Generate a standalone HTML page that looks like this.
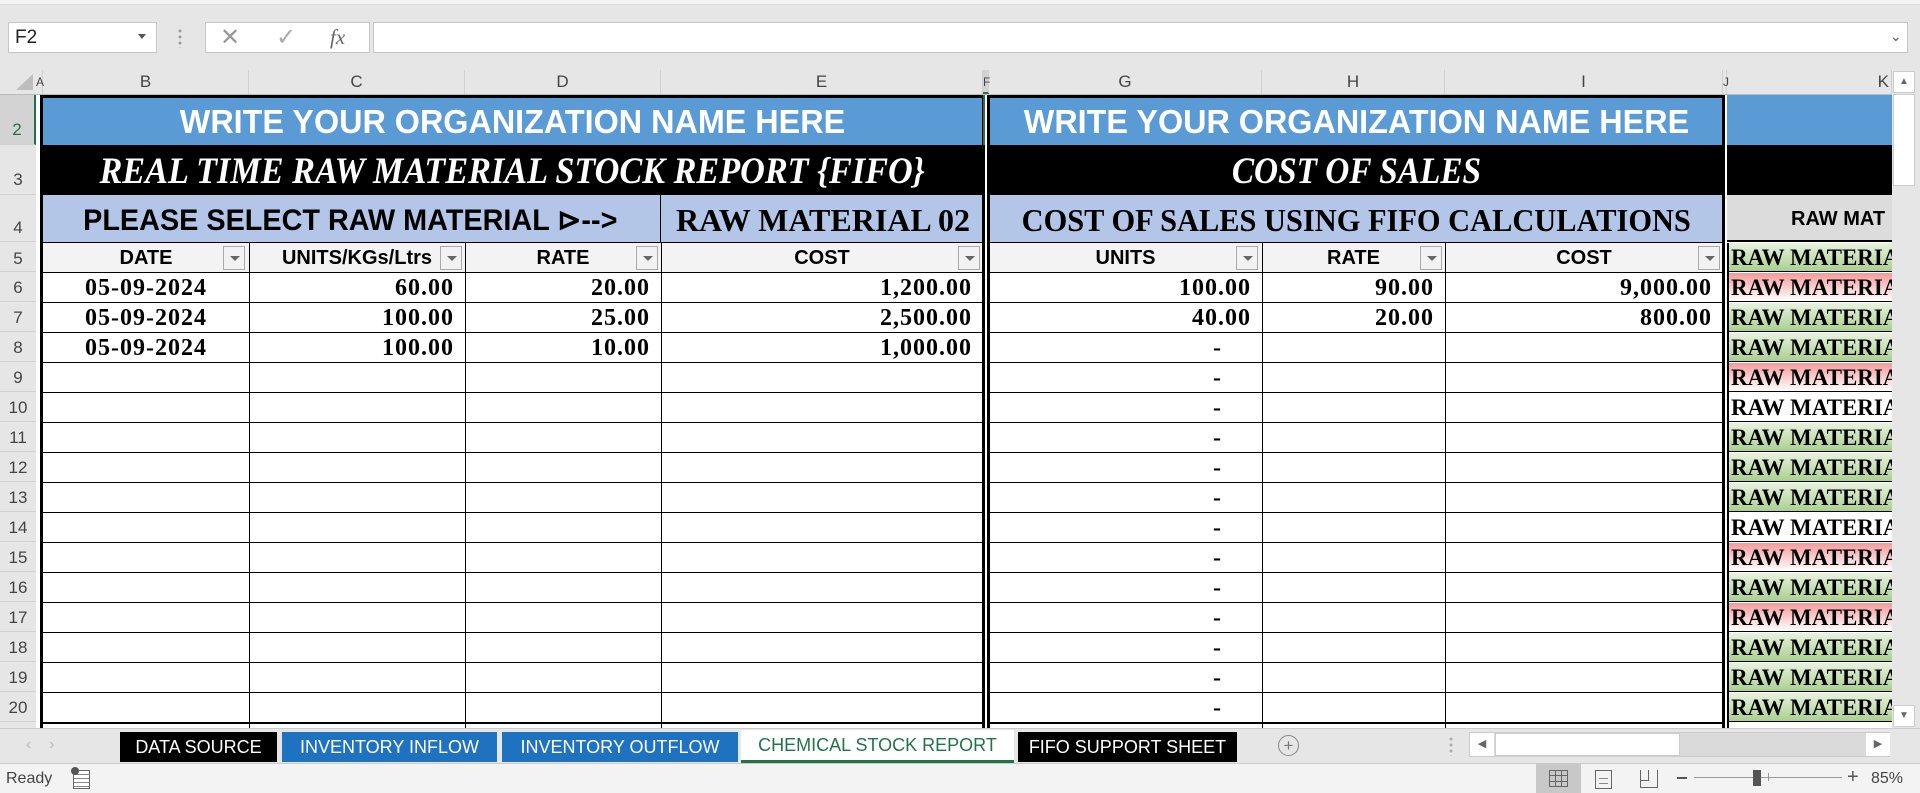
<!DOCTYPE html>
<html><head><meta charset="utf-8">
<style>
*{margin:0;padding:0;box-sizing:border-box}
body{width:1920px;height:793px;overflow:hidden;background:#e6e6e6;font-family:"Liberation Sans",sans-serif;position:relative}
.a{position:absolute;white-space:nowrap;overflow:hidden}
.s{font-family:"Liberation Sans",sans-serif;font-weight:bold}
.sf{font-family:"Liberation Serif",serif;font-weight:bold}
.t{display:inline-block;transform-origin:center center}
.hl{position:absolute;height:1px;background:#000}
.vl{position:absolute;width:1px;background:#000}
.rh{position:absolute;left:0;width:36px;text-align:center;color:#444;font-size:17px;background:#e6e6e6;border-bottom:1px solid #d0d0d0}
.ch{position:absolute;top:70px;height:24px;line-height:24px;text-align:center;color:#444;font-size:17px;border-right:1px solid #d0d0d0}
.fb{position:absolute;width:22px;height:24px;border:1px solid #aaa;background:#f2f2f2;top:246px}
.fb:after{content:"";position:absolute;left:6px;top:9px;border-left:5px solid transparent;border-right:5px solid transparent;border-top:5px solid #666}
.d{position:absolute;font-family:"Liberation Serif",serif;font-weight:bold;font-size:24px;letter-spacing:1px;height:30px;line-height:32px;color:#000}
.k{position:absolute;left:1727px;width:165px;height:29px;line-height:30px;font-family:"Liberation Serif",serif;font-weight:bold;font-size:23px;padding-left:4px;overflow:hidden;white-space:nowrap;border-bottom:1px solid #000}
.g{background:linear-gradient(to bottom,#e8f2e0,#a9d08e)}
.r{background:linear-gradient(to bottom,#f49a9a,#fff)}
.w{background:#fff}
.tab{position:absolute;top:732px;height:30px;line-height:30px;font-size:18px;text-align:center;color:#fff}
</style></head><body>
<div class="a" style="left:0;top:0;width:1920px;height:5px;background:#f3f3f3;border-bottom:1px solid #ddd"></div>
<!-- formula bar -->
<div class="a" style="left:8px;top:22px;width:149px;height:31px;background:#fff;border:1px solid #c6c6c6;font-size:19px;line-height:29px;padding-left:6px;color:#222">F2</div>
<div class="a" style="left:138px;top:34px;width:0;height:0;border-left:4px solid transparent;border-right:4px solid transparent;border-top:5px solid #555"></div>
<div class="a" style="left:178px;top:28px;width:4px;height:20px;background:radial-gradient(circle,#999 1.3px,transparent 1.6px) 0 0/4px 6px"></div>
<div class="a" style="left:205px;top:22px;width:165px;height:31px;background:#fff;border:1px solid #c6c6c6"></div>
<div class="a" style="left:220px;top:22px;font-size:24px;line-height:31px;color:#999">✕</div>
<div class="a" style="left:276px;top:22px;font-size:24px;line-height:31px;color:#aaa">✓</div>
<div class="a" style="left:330px;top:22px;font-size:21px;line-height:31px;color:#666;font-family:'Liberation Serif',serif;font-style:italic">fx</div>
<div class="a" style="left:373px;top:22px;width:1535px;height:31px;background:#fff;border:1px solid #c6c6c6"></div>
<div class="a" style="left:1890px;top:28px;font-size:14px;color:#555">&#8964;</div>
<!-- column headers -->
<div class="a" style="left:0;top:70px;width:1892px;height:25px;background:#e6e6e6;border-bottom:1px solid #bbb"></div>
<div class="a" style="left:16px;top:74px;width:0;height:0;border-left:17px solid transparent;border-bottom:16px solid #bdbdbd"></div>
<div class="ch" style="left:36px;width:7px;font-size:12px">A</div>
<div class="ch" style="left:43px;width:206px">B</div>
<div class="ch" style="left:249px;width:216px">C</div>
<div class="ch" style="left:465px;width:196px">D</div>
<div class="ch" style="left:661px;width:322px">E</div>
<div class="ch" style="left:983px;width:6px;font-size:12px;background:#d3d3d3;border-bottom:2px solid #217346">F</div>
<div class="ch" style="left:989px;width:273px">G</div>
<div class="ch" style="left:1262px;width:183px">H</div>
<div class="ch" style="left:1445px;width:278px">I</div>
<div class="ch" style="left:1723px;width:4px;font-size:12px">J</div>
<div class="ch" style="left:1727px;width:165px;text-align:right;padding-right:2px">K</div>
<!-- row headers -->
<div class="rh" style="top:95px;height:50px;line-height:70px;color:#217346;background:#d3d3d3;border-right:2px solid #217346">2</div>
<div class="rh" style="top:145px;height:50px;line-height:70px">3</div>
<div class="rh" style="top:195px;height:47px;line-height:66px">4</div>
<div class="rh" style="top:242px;height:30px;line-height:34px">5</div>
<div class="rh" style="top:272px;height:30px;line-height:32px">6</div>
<div class="rh" style="top:302px;height:30px;line-height:32px">7</div>
<div class="rh" style="top:332px;height:30px;line-height:32px">8</div>
<div class="rh" style="top:362px;height:30px;line-height:32px">9</div>
<div class="rh" style="top:392px;height:30px;line-height:32px">10</div>
<div class="rh" style="top:422px;height:30px;line-height:32px">11</div>
<div class="rh" style="top:452px;height:30px;line-height:32px">12</div>
<div class="rh" style="top:482px;height:30px;line-height:32px">13</div>
<div class="rh" style="top:512px;height:30px;line-height:32px">14</div>
<div class="rh" style="top:542px;height:30px;line-height:32px">15</div>
<div class="rh" style="top:572px;height:30px;line-height:32px">16</div>
<div class="rh" style="top:602px;height:30px;line-height:32px">17</div>
<div class="rh" style="top:632px;height:30px;line-height:32px">18</div>
<div class="rh" style="top:662px;height:30px;line-height:32px">19</div>
<div class="rh" style="top:692px;height:30px;line-height:32px">20</div>
<div class="a" style="left:36px;top:95px;width:4px;height:633px;background:#fff"></div>
<!-- sheet white area -->
<div class="a" style="left:40px;top:95px;width:1852px;height:633px;background:#fff"></div>
<!-- row 2 -->
<div class="a s" style="left:40px;top:95px;width:945px;height:50px;background:#5b9bd5;color:#fff;text-align:center;line-height:54px;font-size:33px"><span class="t" style="transform:scaleX(.98)">WRITE YOUR ORGANIZATION NAME HERE</span></div>
<div class="a s" style="left:988px;top:95px;width:737px;height:50px;background:#5b9bd5;color:#fff;text-align:center;line-height:54px;font-size:33px"><span class="t" style="transform:scaleX(.98)">WRITE YOUR ORGANIZATION NAME HERE</span></div>
<div class="a" style="left:1727px;top:95px;width:165px;height:50px;background:#5b9bd5"></div>
<!-- row 3 -->
<div class="a sf" style="left:40px;top:145px;width:945px;height:50px;background:#000;color:#fff;text-align:center;line-height:54px;font-size:37px;font-style:italic"><span class="t" style="transform:scaleX(.925)">REAL TIME RAW MATERIAL STOCK REPORT {FIFO}</span></div>
<div class="a sf" style="left:988px;top:145px;width:737px;height:50px;background:#000;color:#fff;text-align:center;line-height:54px;font-size:37px;font-style:italic"><span class="t" style="transform:scaleX(.9)">COST OF SALES</span></div>
<div class="a" style="left:1727px;top:145px;width:165px;height:50px;background:#000"></div>
<!-- row 4 -->
<div class="a s" style="left:40px;top:195px;width:621px;height:47px;background:#b4c6e7;color:#000;text-align:center;line-height:52px;font-size:30px;border-right:1px solid #000"><span class="t" style="transform:scaleX(.96)">PLEASE SELECT RAW MATERIAL ⊳--></span></div>
<div class="a sf" style="left:661px;top:195px;width:324px;height:47px;background:#b4c6e7;color:#000;text-align:center;line-height:50px;font-size:32px"><span class="t" style="transform:scaleX(1.0)">RAW MATERIAL 02</span></div>
<div class="a sf" style="left:988px;top:195px;width:737px;height:47px;background:#b4c6e7;color:#000;text-align:center;line-height:50px;font-size:32px"><span class="t" style="transform:scaleX(.95)">COST OF SALES USING FIFO CALCULATIONS</span></div>
<div class="a s" style="left:1727px;top:195px;width:165px;height:47px;background:#dcdcdc;color:#000;line-height:48px;font-size:20px;padding-left:64px;border-bottom:2px solid #000">RAW MAT</div>
<!-- row 5 -->
<div class="a" style="left:40px;top:242px;width:945px;height:30px;background:#f3f3f3"></div>
<div class="a" style="left:988px;top:242px;width:737px;height:30px;background:#f3f3f3"></div>
<div class="a s" style="left:43px;top:242px;width:206px;height:30px;line-height:33px;text-align:center;font-size:20px">DATE</div>
<div class="a s" style="left:249px;top:242px;width:216px;height:30px;line-height:33px;text-align:center;font-size:20px">UNITS/KGs/Ltrs</div>
<div class="a s" style="left:465px;top:242px;width:196px;height:30px;line-height:33px;text-align:center;font-size:20px">RATE</div>
<div class="a s" style="left:661px;top:242px;width:322px;height:30px;line-height:33px;text-align:center;font-size:20px">COST</div>
<div class="a s" style="left:989px;top:242px;width:273px;height:30px;line-height:33px;text-align:center;font-size:20px">UNITS</div>
<div class="a s" style="left:1262px;top:242px;width:183px;height:30px;line-height:33px;text-align:center;font-size:20px">RATE</div>
<div class="a s" style="left:1445px;top:242px;width:278px;height:30px;line-height:33px;text-align:center;font-size:20px">COST</div>
<div class="fb" style="left:223px"></div>
<div class="fb" style="left:440px"></div>
<div class="fb" style="left:636px"></div>
<div class="fb" style="left:958px"></div>
<div class="fb" style="left:1236px"></div>
<div class="fb" style="left:1420px"></div>
<div class="fb" style="left:1698px"></div>
<!-- horizontal lines -->
<div class="hl" style="left:40px;top:242px;width:945px"></div>
<div class="hl" style="left:988px;top:242px;width:737px"></div>
<div class="hl" style="left:40px;top:272px;width:945px"></div>
<div class="hl" style="left:988px;top:272px;width:737px"></div>
<div class="hl" style="left:40px;top:302px;width:945px"></div><div class="hl" style="left:988px;top:302px;width:737px"></div>
<div class="hl" style="left:40px;top:332px;width:945px"></div><div class="hl" style="left:988px;top:332px;width:737px"></div>
<div class="hl" style="left:40px;top:362px;width:945px"></div><div class="hl" style="left:988px;top:362px;width:737px"></div>
<div class="hl" style="left:40px;top:392px;width:945px"></div><div class="hl" style="left:988px;top:392px;width:737px"></div>
<div class="hl" style="left:40px;top:422px;width:945px"></div><div class="hl" style="left:988px;top:422px;width:737px"></div>
<div class="hl" style="left:40px;top:452px;width:945px"></div><div class="hl" style="left:988px;top:452px;width:737px"></div>
<div class="hl" style="left:40px;top:482px;width:945px"></div><div class="hl" style="left:988px;top:482px;width:737px"></div>
<div class="hl" style="left:40px;top:512px;width:945px"></div><div class="hl" style="left:988px;top:512px;width:737px"></div>
<div class="hl" style="left:40px;top:542px;width:945px"></div><div class="hl" style="left:988px;top:542px;width:737px"></div>
<div class="hl" style="left:40px;top:572px;width:945px"></div><div class="hl" style="left:988px;top:572px;width:737px"></div>
<div class="hl" style="left:40px;top:602px;width:945px"></div><div class="hl" style="left:988px;top:602px;width:737px"></div>
<div class="hl" style="left:40px;top:632px;width:945px"></div><div class="hl" style="left:988px;top:632px;width:737px"></div>
<div class="hl" style="left:40px;top:662px;width:945px"></div><div class="hl" style="left:988px;top:662px;width:737px"></div>
<div class="hl" style="left:40px;top:692px;width:945px"></div><div class="hl" style="left:988px;top:692px;width:737px"></div>
<div class="hl" style="left:40px;top:722px;width:945px;height:2px"></div><div class="hl" style="left:988px;top:722px;width:737px;height:2px"></div>
<!-- vertical lines -->
<div class="vl" style="left:249px;top:242px;height:486px"></div>
<div class="vl" style="left:465px;top:242px;height:486px"></div>
<div class="vl" style="left:661px;top:242px;height:486px"></div>
<div class="vl" style="left:1262px;top:242px;height:486px"></div>
<div class="vl" style="left:1445px;top:242px;height:486px"></div>
<!-- thick outer borders -->
<div class="a" style="left:40px;top:95px;width:945px;height:633px;border:3px solid #000;border-bottom:0"></div>
<div class="a" style="left:987px;top:95px;width:738px;height:633px;border:3px solid #000;border-bottom:0"></div>
<div class="a" style="left:983px;top:95px;width:2px;height:50px;background:#217346"></div>
<div class="a" style="left:1725px;top:95px;width:2px;height:633px;background:#fff"></div>
<!-- data -->
<div class="d" style="left:43px;top:272px;width:206px;text-align:center">05-09-2024</div>
<div class="d" style="left:249px;top:272px;width:205px;text-align:right">60.00</div>
<div class="d" style="left:465px;top:272px;width:185px;text-align:right">20.00</div>
<div class="d" style="left:661px;top:272px;width:311px;text-align:right">1,200.00</div>
<div class="d" style="left:989px;top:272px;width:262px;text-align:right">100.00</div>
<div class="d" style="left:1262px;top:272px;width:172px;text-align:right">90.00</div>
<div class="d" style="left:1445px;top:272px;width:267px;text-align:right">9,000.00</div>
<div class="d" style="left:43px;top:302px;width:206px;text-align:center">05-09-2024</div>
<div class="d" style="left:249px;top:302px;width:205px;text-align:right">100.00</div>
<div class="d" style="left:465px;top:302px;width:185px;text-align:right">25.00</div>
<div class="d" style="left:661px;top:302px;width:311px;text-align:right">2,500.00</div>
<div class="d" style="left:989px;top:302px;width:262px;text-align:right">40.00</div>
<div class="d" style="left:1262px;top:302px;width:172px;text-align:right">20.00</div>
<div class="d" style="left:1445px;top:302px;width:267px;text-align:right">800.00</div>
<div class="d" style="left:43px;top:332px;width:206px;text-align:center">05-09-2024</div>
<div class="d" style="left:249px;top:332px;width:205px;text-align:right">100.00</div>
<div class="d" style="left:465px;top:332px;width:185px;text-align:right">10.00</div>
<div class="d" style="left:661px;top:332px;width:311px;text-align:right">1,000.00</div>
<div class="d" style="left:1213px;top:332px">-</div>
<div class="d" style="left:1213px;top:362px">-</div>
<div class="d" style="left:1213px;top:392px">-</div>
<div class="d" style="left:1213px;top:422px">-</div>
<div class="d" style="left:1213px;top:452px">-</div>
<div class="d" style="left:1213px;top:482px">-</div>
<div class="d" style="left:1213px;top:512px">-</div>
<div class="d" style="left:1213px;top:542px">-</div>
<div class="d" style="left:1213px;top:572px">-</div>
<div class="d" style="left:1213px;top:602px">-</div>
<div class="d" style="left:1213px;top:632px">-</div>
<div class="d" style="left:1213px;top:662px">-</div>
<div class="d" style="left:1213px;top:692px">-</div>
<!-- K column -->
<div class="k g" style="top:243px">RAW MATERIAL</div>
<div class="k r" style="top:273px">RAW MATERIAL</div>
<div class="k g" style="top:303px">RAW MATERIAL</div>
<div class="k g" style="top:333px">RAW MATERIAL</div>
<div class="k r" style="top:363px">RAW MATERIAL</div>
<div class="k w" style="top:393px">RAW MATERIAL</div>
<div class="k g" style="top:423px">RAW MATERIAL</div>
<div class="k g" style="top:453px">RAW MATERIAL</div>
<div class="k g" style="top:483px">RAW MATERIAL</div>
<div class="k w" style="top:513px">RAW MATERIAL</div>
<div class="k r" style="top:543px">RAW MATERIAL</div>
<div class="k g" style="top:573px">RAW MATERIAL</div>
<div class="k r" style="top:603px">RAW MATERIAL</div>
<div class="k g" style="top:633px">RAW MATERIAL</div>
<div class="k g" style="top:663px">RAW MATERIAL</div>
<div class="k g" style="top:693px">RAW MATERIAL</div>
<div class="a" style="left:1727px;top:243px;width:2px;height:485px;background:#000"></div>
<!-- vertical scrollbar -->
<div class="a" style="left:1892px;top:70px;width:28px;height:658px;background:#e6e6e6"></div>
<div class="a" style="left:1893px;top:71px;width:22px;height:22px;background:#fff;border:1px solid #ccc;text-align:center;font-size:10px;line-height:20px;color:#666">▲</div>
<div class="a" style="left:1893px;top:94px;width:22px;height:92px;background:#fff;border:1px solid #ccc"></div>
<div class="a" style="left:1893px;top:705px;width:22px;height:22px;background:#fff;border:1px solid #ccc;text-align:center;font-size:10px;line-height:20px;color:#666">▼</div>
<!-- tab bar -->
<div class="a" style="left:0;top:728px;width:1920px;height:36px;background:#e6e6e6;border-top:1px solid #ccc;border-bottom:1px solid #ccc"></div>
<div class="a" style="left:26px;top:736px;font-size:16px;color:#bbb;background:#e6e6e6">‹&nbsp;&nbsp;&nbsp;&nbsp;›</div>
<div class="tab" style="left:120px;width:157px;background:#000">DATA SOURCE</div>
<div class="tab" style="left:282px;width:215px;background:#1f72c0">INVENTORY INFLOW</div>
<div class="tab" style="left:502px;width:236px;background:#1f72c0">INVENTORY OUTFLOW</div>
<div class="tab" style="left:741px;width:273px;background:#fff;color:#217346;border-bottom:3px solid #217346;top:730px;height:33px">CHEMICAL STOCK REPORT</div>
<div class="tab" style="left:1018px;width:219px;background:#000">FIFO SUPPORT SHEET</div>
<div class="a" style="left:1278px;top:735px;width:21px;height:21px;border:1px solid #888;border-radius:50%;text-align:center;line-height:19px;font-size:17px;color:#777">+</div>
<div class="a" style="left:1449px;top:736px;width:4px;height:20px;background:radial-gradient(circle,#aaa 1.3px,transparent 1.6px) 0 0/4px 6px"></div>
<div class="a" style="left:1469px;top:732px;width:421px;height:25px;background:#dadada;border:1px solid #ccc"></div>
<div class="a" style="left:1470px;top:733px;width:24px;height:23px;background:#fff;text-align:center;font-size:11px;line-height:23px;color:#666">◀</div>
<div class="a" style="left:1495px;top:733px;width:185px;height:23px;background:#fff;border:1px solid #ccc"></div>
<div class="a" style="left:1866px;top:733px;width:24px;height:23px;background:#fff;text-align:center;font-size:11px;line-height:23px;color:#666">▶</div>
<!-- status bar -->
<div class="a" style="left:0;top:764px;width:1920px;height:29px;background:#f3f3f3"></div>
<div class="a" style="left:6px;top:768px;font-size:16px;line-height:22px;color:#444">Ready</div>
<div class="a" style="left:73px;top:770px;width:17px;height:19px;border:1px solid #666;background:repeating-linear-gradient(#fff 0 3px,#888 3px 4px)"></div>
<div class="a" style="left:71px;top:767px;width:8px;height:8px;background:#555;border-radius:50%"></div>
<div class="a" style="left:1536px;top:764px;width:45px;height:29px;background:#c8c8c8"></div>
<div class="a" style="left:1549px;top:770px;width:19px;height:17px;border:1px solid #666;background:linear-gradient(90deg,transparent 5px,#666 5px 6px,transparent 6px 11px,#666 11px 12px,transparent 12px),linear-gradient(transparent 4px,#666 4px 5px,transparent 5px 10px,#666 10px 11px,transparent 11px)"></div>
<div class="a" style="left:1595px;top:770px;width:17px;height:19px;border:1px solid #666;background:repeating-linear-gradient(transparent 0 4px,#888 4px 5px) content-box;padding:3px"></div>
<div class="a" style="left:1640px;top:770px;width:18px;height:18px;border:1px solid #666;border-top:0"></div>
<div class="a" style="left:1648px;top:770px;width:1px;height:10px;background:#666"></div>
<div class="a" style="left:1640px;top:780px;width:9px;height:1px;background:#666"></div>
<div class="a" style="left:1677px;top:777px;width:10px;height:2px;background:#555"></div>
<div class="a" style="left:1694px;top:777px;width:148px;height:1px;background:#999"></div>
<div class="a" style="left:1753px;top:770px;width:8px;height:16px;background:#555"></div>
<div class="a" style="left:1768px;top:773px;width:1px;height:8px;background:#999"></div>
<div class="a" style="left:1847px;top:767px;font-size:20px;line-height:20px;color:#555">+</div>
<div class="a" style="left:1871px;top:768px;font-size:16px;line-height:22px;color:#444">85%</div>
</body></html>
